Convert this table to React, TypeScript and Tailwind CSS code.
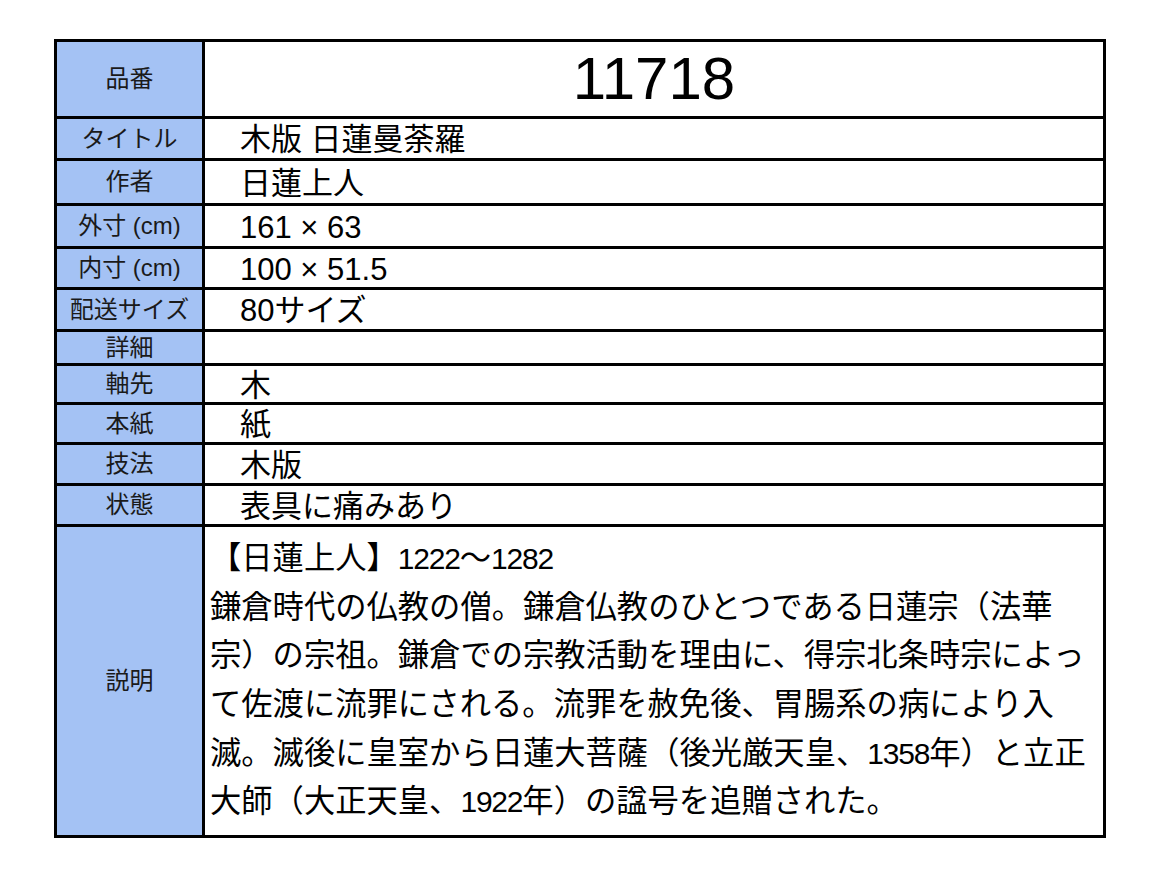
const FONT = "font-['Liberation_Sans','Noto_Sans_CJK_JP',sans-serif]";

type Row = { label: string; value?: string; h: string };

// heights include the 3px top rule
const ROWS: Row[] = [
  { label: "タイトル", value: "木版 日蓮曼荼羅", h: "h-[42px]" },
  { label: "作者", value: "日蓮上人", h: "h-[45px]" },
  { label: "外寸 (cm)", value: "161 × 63", h: "h-[43px]" },
  { label: "内寸 (cm)", value: "100 × 51.5", h: "h-[41px]" },
  { label: "配送サイズ", value: "80サイズ", h: "h-[42px]" },
  { label: "詳細", value: "", h: "h-[34px]" },
  { label: "軸先", value: "木", h: "h-[39px]" },
  { label: "本紙", value: "紙", h: "h-[40px]" },
  { label: "技法", value: "木版", h: "h-[41px]" },
  { label: "状態", value: "表具に痛みあり", h: "h-[41px]" },
];

const SETSUMEI = [
  "【日蓮上人】1222〜1282",
  "鎌倉時代の仏教の僧。鎌倉仏教のひとつである日蓮宗（法華",
  "宗）の宗祖。鎌倉での宗教活動を理由に、得宗北条時宗によっ",
  "て佐渡に流罪にされる。流罪を赦免後、胃腸系の病により入",
  "滅。滅後に皇室から日蓮大菩薩（後光厳天皇、1358年）と立正",
  "大師（大正天皇、1922年）の諡号を追贈された。",
];

// digits in the note sit a little tighter than the kanji around them
function Line({ text }: { text: string }) {
  const parts = text.split(/(\d+)/);
  return (
    <div className="whitespace-nowrap">
      {parts.map((p, i) =>
        /^\d+$/.test(p) ? (
          <span key={i} className="text-[30px] tracking-[-1.2px]">
            {p}
          </span>
        ) : (
          <span key={i}>{p}</span>
        ),
      )}
    </div>
  );
}

function Label({ children }: { children: React.ReactNode }) {
  return (
    <div className="flex w-[148px] shrink-0 items-center justify-center border-r-[3px] border-black bg-[#a4c2f4] text-[24px] text-[#1a1a1a]">
      {children}
    </div>
  );
}

export default function App() {
  return (
    <div className={`min-h-[875px] w-[1159px] bg-white pl-[54px] pt-[39px] ${FONT}`}>
      <div className="w-[1052px] border-[3px] border-black">
        <div className="flex h-[74px]">
          <Label>品番</Label>
          <div className="flex flex-1 items-center justify-center text-[60px] leading-none text-black">11718</div>
        </div>

        {ROWS.map((row) => (
          <div key={row.label} className={`flex border-t-[3px] border-black ${row.h}`}>
            <Label>{row.label}</Label>
            <div className="flex flex-1 items-center pl-[35px] pt-[2px] text-[31px] leading-none text-black">
              {row.value}
            </div>
          </div>
        ))}

        <div className="flex h-[311px] border-t-[3px] border-black">
          <Label>説明</Label>
          <div className="flex flex-1 flex-col justify-center pl-[5px] text-[31.3px] leading-[48.6px] text-black">
            {SETSUMEI.map((line) => (
              <Line key={line} text={line} />
            ))}
          </div>
        </div>
      </div>
    </div>
  );
}
